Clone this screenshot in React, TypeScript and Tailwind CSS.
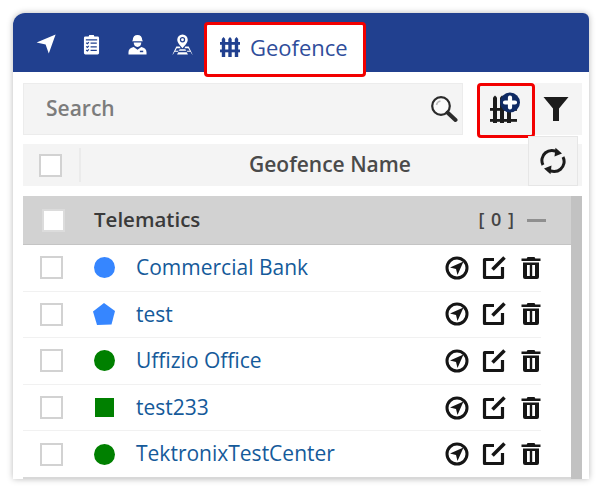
import React from "react";

const Fence = ({ className = "", color = "currentColor" }: { className?: string; color?: string }) => (
  <svg viewBox="0 0 20 20" className={className} fill={color}>
    <path d="M1.800 2 3.500 0 5.200 2V20H1.800z" />
    <path d="M8.300 2 10 0 11.700 2V20H8.300z" />
    <path d="M14.800 2 16.500 0 18.200 2V20h-3.400z" />
    <rect x="0" y="5" width="20" height="2.800" />
    <rect x="0" y="12.500" width="20" height="2.800" />
  </svg>
);

const NavArrow = () => (
  <svg viewBox="0 0 20 20" className="h-[20px] w-[20px]" fill="#fff">
    <path d="M19.600 0.600 0.600 8.600 9.600 10.600 12.800 19.600z" />
  </svg>
);

const Clipboard = () => (
  <svg viewBox="0 0 18 22" className="h-[21px] w-[17px]">
    <path fill="#fff" d="M2.500 2.600H6L6.600 1h4.800l.6 1.600h3.500A1.500 1.500 0 0 1 17 4v16a1.500 1.500 0 0 1-1.500 1.500h-13A1.500 1.500 0 0 1 1 20V4a1.500 1.500 0 0 1 1.500-1.500z" />
    <path stroke="#21408f" strokeWidth="1.300" fill="none" d="M3 6.200h12M3.400 9.200l1.200 1 1.600-1.600M8 9.600h6.600M3.400 13l1.200 1 1.600-1.600M8 13.400h6.600M3.400 16.800l1.200 1 1.600-1.600M8 17.200h6.600" />
  </svg>
);

const Worker = () => (
  <svg viewBox="0 0 20 22" className="h-[23px] w-[19px]" fill="#fff">
    <path d="M5 6.500C5 2.800 7 1 10 1s5 1.800 5 5.500l.8 1H4.200z" />
    <path d="M6 9h8c0 2.800-1.600 4.600-4 4.600S6 11.800 6 9z" />
    <path d="M6 13.600l4 3 4-3c3.400.6 5.500 2.600 5.500 5.500V21.500H.5V19.100C.5 16.200 2.600 14.200 6 13.600z" />
    <rect x="12.500" y="17.500" width="3.500" height="1.600" fill="#21408f" />
  </svg>
);

const MapPin = () => (
  <svg viewBox="0 0 22 22" className="h-[21px] w-[21px]">
    <path fill="#fff" d="M11 .5a5.500 5.500 0 0 1 5.500 5.500c0 3-3.300 6.300-5.500 8.800C8.800 12.300 5.500 9 5.500 6A5.500 5.500 0 0 1 11 .5z" />
    <circle cx="11" cy="6" r="2.800" fill="#21408f" />
    <circle cx="11" cy="6" r="1.500" fill="#fff" />
    <path fill="#fff" d="M4.500 13H8l1 2H5l-1.500 2.500H7l-.8 1.200H2.800L1 21.500H0.500zM14 13h3.500l4 8.500h-.4l-1.700-2.800h-3.400l-.8-1.200h3.500L17 15h-4zM8 16h6l.8 1.500H7.200zM6.500 19h9l1.200 2.500H5.300z" />
  </svg>
);

const SearchGlass = () => (
  <svg viewBox="0 0 28 28" className="h-[28px] w-[28px]">
    <circle cx="11" cy="11" r="8.800" fill="#fbfbfb" stroke="#2b2b2b" strokeWidth="2.200" />
    <path d="M6.500 10a5 5 0 0 1 4-4" stroke="#bdbdbd" strokeWidth="1.500" fill="none" />
    <path d="M17.500 17.500 25.500 25" stroke="#2b2b2b" strokeWidth="4" strokeLinecap="round" />
  </svg>
);

const FenceAdd = () => (
  <svg viewBox="0 0 32 32" className="h-[32px] w-[32px] overflow-visible">
    <g fill="#1c1c1c">
      <path d="M3 2.500 5 0.500 7 2.500V28H3z" />
      <path d="M10 2.500 12 0.500 14 2.500V28h-4z" />
      <path d="M17 12h4V28h-4z" />
      <rect x="0" y="13" width="27" height="2.800" />
      <rect x="0" y="24" width="27" height="2.800" />
    </g>
    <circle cx="20" cy="7.500" r="10" fill="#0f2a63" />
    <path d="M20 2.500v10M15 7.500h10" stroke="#fff" strokeWidth="4.200" strokeLinecap="round" />
  </svg>
);

const Funnel = () => (
  <svg viewBox="0 0 26 26" className="h-[26px] w-[26px]" fill="#1c1c1c">
    <path d="M0.500 1h25L16 12.500V25h-6V12.500z" />
  </svg>
);

const Sync = () => (
  <svg viewBox="0 0 26 28" className="h-[28px] w-[26px]" fill="none" stroke="#1c1c1c" strokeWidth="3">
    <path d="M3 18A10 10 0 0 1 18 5.500" />
    <path d="M23 10A10 10 0 0 1 8 22.500" />
    <path fill="#1c1c1c" stroke="none" d="M15.500.8 22 6.500 14.500 9.500zM10.500 27.200 4 21.500 11.500 18.500z" />
  </svg>
);

const Compass = () => (
  <svg viewBox="0 0 24 24" className="h-[24px] w-[24px]">
    <circle cx="12" cy="12" r="10" fill="none" stroke="#151515" strokeWidth="3" />
    <path d="M18.500 5.500 5 11.500 11 13 12.500 19z" fill="#151515" />
  </svg>
);

const Edit = () => (
  <svg viewBox="0 0 24 24" className="h-[24px] w-[24px]" fill="none" stroke="#151515" strokeWidth="3.200">
    <path d="M12 3.500H2.500v18h18V11" strokeLinejoin="round" />
    <path d="M22.500 1.500 10.500 13.500" strokeWidth="3.600" />
  </svg>
);

const Trash = () => (
  <svg viewBox="0 0 20 24" className="h-[24px] w-[20px]" fill="#151515">
    <path d="M6.500 1h7l.8 1.500H19.500V5H.5V2.500h5.200z" />
    <path d="M2 6.500h16V21a2 2 0 0 1-2 2H4a2 2 0 0 1-2-2zM6 9v11h2.800V9zm5.200 0v11H14V9z" fillRule="evenodd" />
  </svg>
);

const Box = ({ className = "" }: { className?: string }) => (
  <span className={`block h-[23px] w-[23px] shrink-0 border-2 border-[#d2d2d2] bg-white ${className}`} />
);

const Shape = ({ kind }: { kind: string }) => {
  if (kind === "blue-circle") return <span className="block h-[21px] w-[21px] rounded-full bg-[#3686ff]" />;
  if (kind === "green-circle") return <span className="block h-[21px] w-[21px] rounded-full bg-[#008000]" />;
  if (kind === "green-square") return <span className="block h-[19px] w-[19px] bg-[#008000]" />;
  return (
    <svg viewBox="0 0 24 24" className="h-[24px] w-[24px]" fill="#3686ff">
      <path d="M12 1 23 9 19.500 22.500 5 23 1 9.500z" />
    </svg>
  );
};

const rows = [
  { name: "Commercial Bank", kind: "blue-circle" },
  { name: "test", kind: "blue-pentagon" },
  { name: "Uffizio Office", kind: "green-circle" },
  { name: "test233", kind: "green-square" },
  { name: "TektronixTestCenter", kind: "green-circle" },
];

export default function App() {
  return (
    <div className="h-[491px] w-[600px] overflow-hidden bg-white pl-[13px] pt-[13px] font-['Open_Sans','Noto_Sans',sans-serif]">
      <div className="flex h-[466px] w-[576px] flex-col rounded-tl-[12px] rounded-tr-[6px] bg-white shadow-[0_0_6px_rgba(0,0,0,0.28)]">
        {/* Tab bar */}
        <div className="relative flex h-[59px] shrink-0 items-center rounded-tl-[12px] rounded-tr-[6px] bg-[#21408f] pl-[23px] pt-[3px]">
          <span className="flex w-[47px] items-center"><NavArrow /></span>
          <span className="flex w-[45px] items-center"><Clipboard /></span>
          <span className="flex w-[44px] items-center"><Worker /></span>
          <span className="flex w-[30px] items-center"><MapPin /></span>
          <div className="absolute left-[191px] top-[9px] flex h-[55px] w-[162px] items-center gap-[10px] rounded-[4px] border-[3px] border-[#f20000] bg-white pb-[5px] pl-[13px]">
            <Fence className="h-[20px] w-[20px] text-[#21408f]" />
            <span className="text-[22px] leading-none text-[#2f4d9b]">Geofence</span>
          </div>
        </div>

        {/* Search row */}
        <div className="mt-[11px] flex h-[52px] shrink-0 pl-[10px]">
          <div className="flex w-[440px] items-center justify-between border border-[#ececec] bg-[#f4f4f4] pl-[22px] pr-[4px]">
            <span className="text-[21px] font-semibold text-[#7c7c7c]">Search</span>
            <SearchGlass />
          </div>
          <div className="relative ml-[14px] flex h-[55px] w-[58px] items-center justify-center rounded-[4px] border-[3px] border-[#f20000] bg-[#f4f4f4]">
            <FenceAdd />
          </div>
          <div className="flex h-[52px] w-[47px] items-center justify-center bg-[#f4f4f4] pr-[5px]">
            <Funnel />
          </div>
        </div>

        {/* Header row */}
        <div className="relative mx-[10px] mt-[9px] flex h-[42px] w-[559px] shrink-0 items-center bg-[#f4f4f4]">
          <div className="flex h-[34px] w-[58px] items-center justify-center border-r-2 border-[#ebebeb] pr-[2px]">
            <Box />
          </div>
          <span className="ml-[168px] text-[21px] font-semibold text-[#4a4a4a]">Geofence Name</span>
          <div className="absolute left-[505px] top-[-8px] flex h-[50px] w-[50px] items-center justify-center border border-[#e6e6e6] bg-[#f4f4f4]">
            <Sync />
          </div>
        </div>

        {/* List */}
        <div className="mx-[10px] mt-[10px] flex min-h-0 w-[559px] flex-1">
          <div className="flex min-h-0 flex-1 flex-col">
            <div className="flex h-[49px] shrink-0 items-center border-b border-[#c4c4c4] bg-[#d2d2d2] pl-[19px] pr-[25px]">
              <span className="block h-[23px] w-[23px] shrink-0 border-2 border-[#dcdcdc] bg-white" />
              <span className="mb-[2px] ml-[29px] text-[20.500px] font-semibold text-[#3a3a3a]">Telematics</span>
              <span className="mb-[2px] ml-auto text-[18px] font-semibold tracking-[1px] text-[#444]">[ 0 ]</span>
              <span className="ml-[12px] h-[3px] w-[19px] bg-[#8f8f8f]" />
            </div>
            <div className="flex min-h-0 flex-1 flex-col border-b-2 border-[#d8d8d8]">
              {rows.map((r, i) => (
                <div
                  key={r.name}
                  className={`mr-[30px] flex min-h-0 flex-1 items-center pl-[17px] ${i < 4 ? "border-b border-[#f1f1f1]" : ""}`}
                >
                  <Box />
                  <span className="ml-[29px] flex w-[24px] justify-center"><Shape kind={r.kind} /></span>
                  <span className="ml-[20px] text-[21px] font-medium text-[#155a9a]">{r.name}</span>
                  <span className="ml-auto flex items-center">
                    <Compass />
                    <span className="ml-[13px]"><Edit /></span>
                    <span className="ml-[15px]"><Trash /></span>
                  </span>
                </div>
              ))}
            </div>
          </div>
          <div className="w-[11px] bg-[#c2c2c2]" />
        </div>
      </div>
    </div>
  );
}
